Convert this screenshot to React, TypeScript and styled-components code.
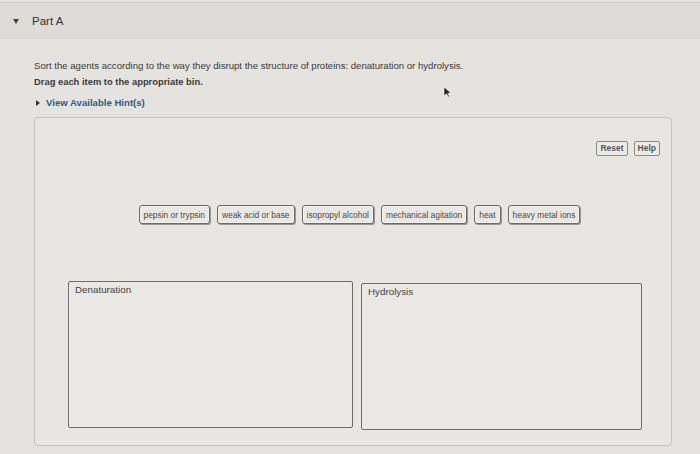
import styled, { createGlobalStyle } from 'styled-components';

const GlobalStyle = createGlobalStyle`
  html, body {
    margin: 0;
    padding: 0;
    background: #e4e3df;
    font-family: "Liberation Sans", Arial, sans-serif;
    color: #3b3b3b;
  }
`;

const Page = styled.div`
  width: 700px;
  height: 454px;
  overflow: hidden;
  position: relative;
  background: #e4e3df;
`;

const Header = styled.div`
  margin-top: 2px;
  height: 36px;
  border-top: 1px solid #cbcac6;
  background: #dddcd8;
  display: flex;
  align-items: center;
  padding-left: 13px;
  gap: 13px;
  font-size: 11.5px;
  color: #333;
`;

const Caret = styled.span`
  width: 0;
  height: 0;
  border-left: 3.5px solid transparent;
  border-right: 3.5px solid transparent;
  border-top: 5px solid #444;
`;

const Body = styled.div`
  padding: 21px 28px 0 34px;
`;

const Prompt = styled.p`
  margin: 0;
  font-size: 9.6px;
  line-height: 12px;
`;

const Instruction = styled.p`
  margin: 4px 0 0;
  font-size: 9.4px;
  font-weight: bold;
  line-height: 12px;
`;

const HintLink = styled.div`
  margin-top: 9px;
  display: flex;
  align-items: center;
  gap: 6px;
  padding-left: 2px;
  font-size: 9.6px;
  font-weight: bold;
  color: #2c5d86;
`;

const HintArrow = styled.span`
  width: 0;
  height: 0;
  border-top: 3.5px solid transparent;
  border-bottom: 3.5px solid transparent;
  border-left: 4.5px solid #3a3a3a;
`;

const Panel = styled.div`
  margin-top: 9px;
  height: 329px;
  box-sizing: border-box;
  border: 1px solid #c6c5c1;
  border-radius: 4px;
  background: #e7e6e2;
  padding: 23px 11px 0 0;
  display: flex;
  flex-direction: column;
`;

const Toolbar = styled.div`
  display: flex;
  justify-content: flex-end;
  gap: 6px;
`;

const SmallButton = styled.button`
  font-family: "Liberation Sans", Arial, sans-serif;
  font-size: 8.5px;
  font-weight: bold;
  color: #555;
  background: #ecebe7;
  border: 1px solid #8d8c88;
  border-radius: 2px;
  padding: 2px 3px;
  height: 15px;
  line-height: 9px;
`;

const ChipRow = styled.div`
  margin-top: 49px;
  display: flex;
  justify-content: center;
  gap: 7px;
  padding-left: 24px;
`;

const Chip = styled.div`
  font-size: 8.4px;
  color: #4a4a4a;
  height: 19px;
  box-sizing: border-box;
  padding: 0 4px;
  display: flex;
  align-items: center;
  background: #e9e8e4;
  border: 1px solid #6b6a67;
  border-radius: 3px;
  box-shadow: inset 0 0 0 1px #f3f2ee, 1px 1px 0 #9a9995;
`;

const Bins = styled.div`
  margin-top: 57px;
  padding-left: 33px;
  display: grid;
  grid-template-columns: 285px 281px;
  gap: 8px;
`;

const Bin = styled.div<{ $offset?: number }>`
  height: 147px;
  margin-top: ${p => p.$offset ?? 0}px;
  box-sizing: border-box;
  border: 1px solid #6e6d6a;
  border-radius: 2px;
  background: #e9e8e5;
  padding: 2px 6px;
  font-size: 9.8px;
  color: #444;
`;

const Cursor = styled.svg`
  position: absolute;
  left: 443px;
  top: 86px;
`;

const agents = [
  'pepsin or trypsin',
  'weak acid or base',
  'isopropyl alcohol',
  'mechanical agitation',
  'heat',
  'heavy metal ions',
];

const App = () => {
  return (
    <Page>
      <GlobalStyle />
      <Header>
        <Caret />
        <span>Part A</span>
      </Header>
      <Body>
        <Prompt>
          Sort the agents according to the way they disrupt the structure of
          proteins: denaturation or hydrolysis.
        </Prompt>
        <Instruction>Drag each item to the appropriate bin.</Instruction>
        <HintLink>
          <HintArrow />
          View Available Hint(s)
        </HintLink>
        <Panel>
          <Toolbar>
            <SmallButton>Reset</SmallButton>
            <SmallButton>Help</SmallButton>
          </Toolbar>
          <ChipRow>
            {agents.map(a => (
              <Chip key={a}>{a}</Chip>
            ))}
          </ChipRow>
          <Bins>
            <Bin>Denaturation</Bin>
            <Bin $offset={2}>Hydrolysis</Bin>
          </Bins>
        </Panel>
      </Body>
      <Cursor width="9" height="12" viewBox="0 0 9 12">
        <path d="M1 1 L1 10 L3.5 7.8 L5.2 11 L6.5 10.4 L4.9 7.3 L8 7.1 Z" fill="#222" stroke="#fff" strokeWidth="0.6" />
      </Cursor>
    </Page>
  );
};

export default App;
